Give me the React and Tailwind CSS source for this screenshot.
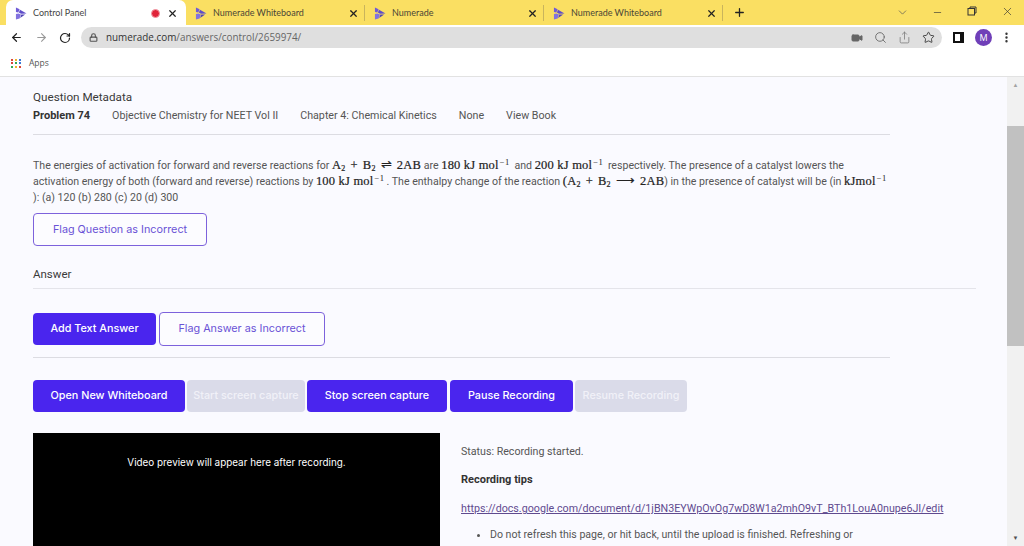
import { ArrowLeft, ArrowRight, RotateCw, Lock, Video, Search, Share, Star, Plus, X, ChevronDown, Minus, EllipsisVertical } from "lucide-react";

const tabs = [
  { title: "Numerade Whiteboard" },
  { title: "Numerade" },
  { title: "Numerade Whiteboard" },
];

function Logo() {
  return (
    <svg width="12" height="13" viewBox="0 0 13 14" className="shrink-0">
      <path d="M1 0.5 L5 2.5 L3.6 6 L1 5.5Z" fill="#6f5bd6" />
      <path d="M5.4 3 L12.5 7 L6.5 7.4 L4.2 6Z" fill="#5f4ec9" />
      <path d="M3.8 7 L6.4 8 L5 12.5 L1 13.5 L1 7.5Z" fill="#8272df" />
      <path d="M6.8 8 L11 8 L5.6 12Z" fill="#5044b5" />
    </svg>
  );
}

function Tab({ title }) {
  return (
    <div className="w-[179px] h-[25px] flex items-center shrink-0 pl-[9px] pt-px">
      <Logo />
      <span className="ml-[6px] text-[9px] text-[#4a4636] flex-1 font-['Lato',sans-serif]">{title}</span>
      <X size={11} strokeWidth={2.6} className="text-[#222]" />
      <div className="w-px h-[16px] bg-[#c9b45c] ml-[5px]" />
    </div>
  );
}

function M({ children }) {
  return <span className="font-['Liberation_Serif',serif] text-[12.5px] leading-[0] text-[#222] tracking-[0.2px] [-webkit-text-stroke:0.2px_#222]">{children}</span>;
}

// equations sit a bit wider than plain units
function Eq({ children }) {
  return <span className="font-['Liberation_Serif',serif] text-[12.5px] leading-[0] text-[#222] tracking-[0.2px] [word-spacing:1.7px] [-webkit-text-stroke:0.2px_#222]">{children}</span>;
}

function Sub({ children }) {
  return <sub className="text-[8px] leading-[0] font-['Liberation_Serif',serif]">{children}</sub>;
}

function MinusOne() {
  return <sup className="text-[8.5px] leading-[0] font-['Liberation_Serif',serif] text-[#222] ml-[1px] mr-[2px] tracking-[0.5px]">−1</sup>;
}

function Solid({ w, children }) {
  return (
    <button className={`${w} h-[32px] pt-px rounded-[4px] bg-[#4a25ee] text-white text-[10.8px] font-medium font-['Inter',sans-serif] shrink-0`}>
      {children}
    </button>
  );
}

function Disabled({ w, children }) {
  return (
    <button className={`${w} h-[32px] pt-px rounded-[4px] bg-[#dadbe9] text-[#f1f1f8] text-[10.8px] font-medium font-['Inter',sans-serif] shrink-0`}>
      {children}
    </button>
  );
}

function Outline({ w, h, children }) {
  return (
    <button className={`${w} ${h} pt-px rounded-[4px] border border-[#7d62dc] text-[#6a52d6] bg-[#fcfcff] text-[10.8px] font-['Inter',sans-serif] shrink-0`}>
      {children}
    </button>
  );
}

export default function App() {
  return (
    <div className="w-[1024px] h-[546px] overflow-hidden flex flex-col bg-white font-['Open_Sans',sans-serif]">
      {/* tab strip */}
      <div className="h-[25px] bg-[#fadf62] flex items-center shrink-0 pl-[6px]">
        <div className="w-[180px] h-[25px] bg-white rounded-t-[7px] flex items-center pl-[9px] pr-[8px] pt-px shrink-0">
          <Logo />
          <span className="ml-[6px] text-[9px] text-[#444] flex-1 font-['Lato',sans-serif]">Control Panel</span>
          <span className="w-[9px] h-[9px] rounded-full bg-[#e0243a] border border-[#f09aa5] mr-[7px]" />
          <X size={11} strokeWidth={2.6} className="text-[#222]" />
        </div>
        <Tab {...tabs[0]} />
        <Tab {...tabs[1]} />
        <Tab {...tabs[2]} />
        <Plus size={13} strokeWidth={2.4} className="text-[#222] ml-[10px]" />
        <div className="flex-1" />
        <ChevronDown size={13} strokeWidth={1.3} className="text-[#555] mr-[23px]" />
        <Minus size={11} strokeWidth={1.4} className="text-[#333] mr-[24px]" />
        <svg width="10" height="10" viewBox="0 0 10 10" className="mr-[24px] mb-[3px]" fill="none" stroke="#333" strokeWidth="1">
          <rect x="1" y="2.5" width="6.5" height="6.5" />
          <path d="M3 2.5V1h6v6H7.5" />
        </svg>
        <X size={13} strokeWidth={1.2} className="text-[#333] mr-[10px] mb-[3px]" />
      </div>

      {/* toolbar */}
      <div className="h-[25px] flex items-center shrink-0 pl-[10px] bg-white">
        <ArrowLeft size={13} strokeWidth={2.2} className="text-[#222]" />
        <ArrowRight size={13} strokeWidth={2} className="text-[#999] ml-[12px]" />
        <RotateCw size={12} strokeWidth={2.4} className="text-[#222] ml-[11px]" />
        <div className="w-[861px] h-[21px] ml-[10px] rounded-full bg-[#dfdfdf] flex items-center pl-[8px] pr-[7px]">
          <Lock size={9} strokeWidth={3} className="text-[#555]" />
          <span className="ml-[8px] text-[9.9px] text-[#333]">
            numerade.com<span className="text-[#666]">/answers/control/2659974/</span>
          </span>
          <div className="flex-1" />
          <Video size={12} fill="#666" className="text-[#666]" />
          <Search size={13} strokeWidth={1.6} className="text-[#666] ml-[11px]" />
          <Share size={13} strokeWidth={1.4} className="text-[#777] ml-[11px]" />
          <Star size={13} strokeWidth={1.8} className="text-[#444] ml-[11px]" />
        </div>
        <div className="w-[11px] h-[11px] border-2 border-[#111] border-r-[4px] ml-[11px]" />
        <div className="w-[17px] h-[17px] rounded-full bg-[#6f3fb8] text-white text-[9px] flex items-center justify-center ml-[11px]">M</div>
        <EllipsisVertical size={13} strokeWidth={2.4} className="text-[#333] ml-[8px]" />
      </div>

      {/* bookmarks */}
      <div className="h-[27px] flex items-center shrink-0 pl-[11px] bg-white border-b border-[#e2e2e2]">
        <div className="grid grid-cols-3 gap-[1.5px] w-[10px]">
          {["#d9453a", "#f0b429", "#3a78d8", "#d9453a", "#34a853", "#3a78d8", "#34a853", "#f0b429", "#d9453a"].map((c, i) => (
            <span key={i} className="w-[2px] h-[2px]" style={{ background: c }} />
          ))}
        </div>
        <span className="ml-[8px] text-[8.5px] text-[#555]">Apps</span>
      </div>

      {/* page */}
      <div className="flex-1 min-h-0 flex bg-[#fafaff] overflow-hidden">
        <div className="w-[1007px] shrink-0 pl-[33px] pt-[13px] text-[#555] font-['Roboto',sans-serif]">
          <div className="w-[857px]">
            <p className="text-[11.7px] leading-[14px] text-[#3a3a3a]">Question Metadata</p>
            <div className="flex items-center gap-[22px] mt-[5px] text-[10.7px] leading-[14px]">
              <span className="font-bold text-[#333] text-[11px]">Problem 74</span>
              <span>Objective Chemistry for NEET Vol II</span>
              <span>Chapter 4: Chemical Kinetics</span>
              <span>None</span>
              <span>View Book</span>
            </div>
            <div className="h-px bg-[#dcdce2] mt-[11px]" />
            <p className="text-[10.6px] leading-[16px] mt-[23px] whitespace-nowrap">
              The energies of activation for forward and reverse reactions for <Eq>A<Sub>2</Sub> + B<Sub>2</Sub> ⇌ 2AB</Eq> are <M>180 kJ mol</M><MinusOne /> and <M>200 kJ mol</M><MinusOne /> respectively. The presence of a catalyst lowers the
              <br />
              activation energy of both (forward and reverse) reactions by <M>100 kJ mol</M><MinusOne />. The enthalpy change of the reaction <Eq>(A<Sub>2</Sub> + B<Sub>2</Sub> ⟶ 2AB</Eq>) in the presence of catalyst will be (in <M>kJmol</M><MinusOne />
              <br />
              ): (a) 120 (b) 280 (c) 20 (d) 300
            </p>
            <div className="mt-[7px]">
              <Outline w="w-[174px]" h="h-[33px]">Flag Question as Incorrect</Outline>
            </div>
          </div>

          <p className="text-[11.5px] leading-[14px] text-[#3a3a3a] mt-[21px]">Answer</p>
          <div className="w-[943px] h-px bg-[#e4e4ea] mt-[7px]" />

          <div className="flex items-center gap-[3px] mt-[23px]">
            <Solid w="w-[123px]">Add Text Answer</Solid>
            <Outline w="w-[166px]" h="h-[34px]">Flag Answer as Incorrect</Outline>
          </div>
          <div className="w-[857px] h-px bg-[#dcdce2] mt-[11px]" />

          <div className="flex items-center gap-[2px] mt-[22px]">
            <Solid w="w-[152px]">Open New Whiteboard</Solid>
            <Disabled w="w-[118px]">Start screen capture</Disabled>
            <Solid w="w-[140px]">Stop screen capture</Solid>
            <Solid w="w-[123px] ml-[1px]">Pause Recording</Solid>
            <Disabled w="w-[112px]">Resume Recording</Disabled>
          </div>

          <div className="flex mt-[21px]">
            <div className="w-[407px] h-[140px] bg-black shrink-0 text-white text-[9.9px] text-center pt-[22px] font-['Inter',sans-serif]">
              Video preview will appear here after recording.
            </div>
            <div className="ml-[21px] text-[10.65px] leading-[14px] pt-[12px]">
              <p>Status: Recording started.</p>
              <p className="font-bold text-[#333] text-[11px] mt-[14px]">Recording tips</p>
              <a className="block underline text-[#5f4a8f] text-[10.7px] mt-[15px] whitespace-nowrap">https://docs.google.com/document/d/1jBN3EYWpOvOg7wD8W1a2mhO9vT_BTh1LouA0nupe6JI/edit</a>
              <ul className="list-disc pl-[29px] mt-[12px] text-[10.6px]">
                <li>Do not refresh this page, or hit back, until the upload is finished. Refreshing or</li>
              </ul>
            </div>
          </div>
        </div>

        {/* scrollbar */}
        <div className="w-[17px] shrink-0 bg-[#f1f1f1] flex flex-col items-center">
          <div className="h-[49px] pt-[4px] text-[#a3a3a3] text-[6px] leading-[8px]">▲</div>
          <div className="w-[17px] h-[220px] bg-[#c1c1c1] shrink-0" />
          <div className="flex-1" />
          <div className="h-[12px] text-[#505050] text-[6px] leading-[8px]">▼</div>
        </div>
      </div>
    </div>
  );
}
